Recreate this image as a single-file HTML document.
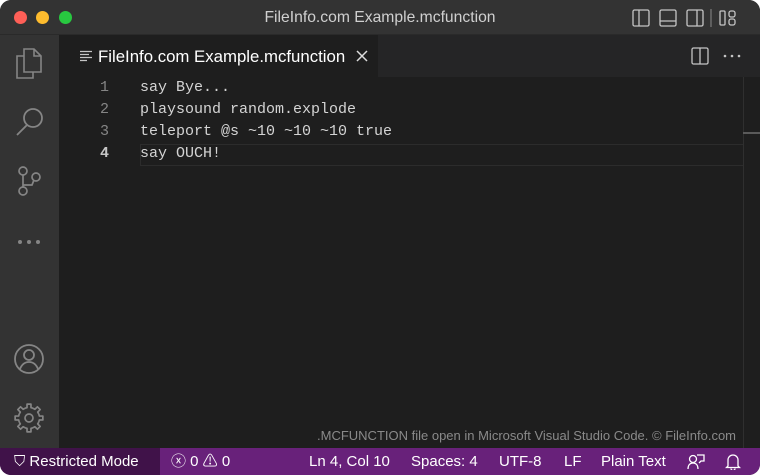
<!DOCTYPE html>
<html><head><style>
*{margin:0;padding:0;box-sizing:border-box}
body{width:760px;height:475px;background:#fff;overflow:hidden;font-family:"Liberation Sans",sans-serif}
.win{position:absolute;left:0;top:0;width:760px;height:475px;border-radius:11px;overflow:hidden;background:#1e1e1e}
.title{position:absolute;left:0;top:0;width:760px;height:35px;background:#333333;border-bottom:1px solid #2a2a2a;color:#d0d0d0;font-size:15.7px;text-align:center;line-height:35px}
.dot{position:absolute;top:11px;width:13px;height:13px;border-radius:50%}
.act{position:absolute;left:0;top:35px;width:59px;height:413px;background:#333333}
.tabs{position:absolute;left:59px;top:35px;width:701px;height:42px;background:#252526}
.tab{position:absolute;left:0;top:0;width:319px;height:42px;background:#1e1e1e;color:#fff;font-size:16.8px;line-height:44px;padding-left:39px}
.code{position:absolute;top:77px;font-family:"Liberation Mono",monospace;font-size:15px;line-height:22px;color:#d4d4d4}
.ln{left:59px;width:50px;text-align:right;color:#858585}
.status{position:absolute;left:0;top:448px;width:760px;height:27px;background:#68217a;color:#fff;font-size:15px;line-height:27px}
.status span{position:absolute;top:0}
svg{position:absolute}
</style></head><body><div class="win">
<div class="title">FileInfo.com Example.mcfunction
<div class="dot" style="left:14px;background:#fe5f57"></div>
<div class="dot" style="left:36px;background:#febc2e"></div>
<div class="dot" style="left:59px;background:#28c840"></div>
<svg style="left:632px;top:9px" width="120" height="18" fill="none" stroke="#c5c5c5" stroke-width="1.3">
<rect x="1" y="1" width="16" height="16" rx="1.5"/><line x1="7" y1="1" x2="7" y2="17"/>
<rect x="28" y="1" width="16" height="16" rx="1.5"/><line x1="28" y1="12" x2="44" y2="12"/>
<rect x="55" y="1" width="16" height="16" rx="1.5"/><line x1="65" y1="1" x2="65" y2="17"/>
<line x1="79" y1="0" x2="79" y2="18" stroke="#777"/>
<rect x="88" y="2" width="5" height="14" rx="1"/><rect x="97" y="2" width="6" height="6" rx="2"/><rect x="97" y="10" width="6" height="6" rx="2"/>
</svg>
</div>
<div class="act">
<svg style="left:15px;top:13px" width="30" height="32" fill="none" stroke="#858585" stroke-width="1.6"><path d="M9 1h10l7 7v16H9z M19 1v7h7"/><path d="M9 8H2v22h16v-6"/></svg>
<svg style="left:16px;top:72px" width="30" height="32" fill="none" stroke="#858585" stroke-width="1.8"><circle cx="17" cy="11" r="9"/><path d="M11 18L1 28"/></svg>
<svg style="left:16px;top:130px" width="28" height="32" fill="none" stroke="#858585" stroke-width="1.7"><circle cx="7" cy="6" r="4"/><circle cx="20" cy="12" r="4"/><circle cx="7" cy="26" r="4"/><path d="M7 10v12M7 20h9l2-5"/></svg>
<svg style="left:17px;top:204px" width="26" height="6" fill="#858585"><circle cx="3" cy="3" r="2"/><circle cx="12" cy="3" r="2"/><circle cx="21" cy="3" r="2"/></svg>
<svg style="left:13px;top:308px" width="32" height="32" fill="none" stroke="#858585" stroke-width="1.8"><circle cx="16" cy="16" r="14"/><circle cx="16" cy="12" r="5"/><path d="M7 26c2-5 5-7 9-7s7 2 9 7"/></svg>
<svg style="left:13px;top:367px" width="32" height="32" fill="none" stroke="#858585" stroke-width="1.7" stroke-linejoin="round">
<g transform="translate(16,16)">
<path id="t" d="M-4.02 -9.70A10.5 10.5 0 0 1 -2 -10.31L-1.95 -13.86L1.95 -13.86L2 -10.31A10.5 10.5 0 0 1 4.02 -9.70"/>
<use href="#t" transform="rotate(45)"/><use href="#t" transform="rotate(90)"/><use href="#t" transform="rotate(135)"/><use href="#t" transform="rotate(180)"/><use href="#t" transform="rotate(225)"/><use href="#t" transform="rotate(270)"/><use href="#t" transform="rotate(315)"/>
<circle r="4"/></g></svg>
</div>
<div class="tabs">
<div class="tab">FileInfo.com Example.mcfunction
<svg style="left:20px;top:15px" width="14" height="12" stroke="#c5c5c5" stroke-width="1.3"><path d="M1 1.5h12M1 4.5h9M1 7.5h12M1 10.5h7"/></svg>
<svg style="left:296px;top:14px" width="14" height="14" stroke="#ddd" stroke-width="1.5"><path d="M2 2l10 10M12 2L2 12"/></svg>
</div>
<svg style="left:632px;top:12px" width="18" height="18" fill="none" stroke="#c5c5c5" stroke-width="1.3"><rect x="1" y="1" width="16" height="16" rx="1.5"/><line x1="9" y1="1" x2="9" y2="17"/></svg>
<svg style="left:664px;top:19px" width="20" height="4" fill="#c5c5c5"><circle cx="2" cy="2" r="1.3"/><circle cx="9" cy="2" r="1.3"/><circle cx="16" cy="2" r="1.3"/></svg>
</div>
<div style="position:absolute;left:140px;top:144px;width:604px;height:22px;border:1px solid #2c2c2c"></div>
<div style="position:absolute;left:743px;top:77px;width:1px;height:371px;background:#2f2f2f"></div>
<div style="position:absolute;left:743px;top:132px;width:17px;height:2px;background:#5a5a5a"></div>
<div class="code ln">1<br>2<br>3<br><span style="color:#c6c6c6;font-weight:bold">4</span></div>
<div class="code" style="left:140px">say Bye...<br>playsound random.explode<br>teleport @s ~10 ~10 ~10 true<br>say OUCH!</div>
<div style="position:absolute;right:24px;top:428px;color:#8a8a8a;font-size:13px">.MCFUNCTION file open in Microsoft Visual Studio Code. © FileInfo.com</div>
<div class="status">
<div style="position:absolute;left:0;top:0;width:160px;height:27px;background:#401249"></div>
<span style="left:14px">⛉ Restricted Mode</span>
<span style="left:171px">ⓧ 0 ⚠ 0</span>
<span style="left:309px">Ln 4, Col 10</span>
<span style="left:411px">Spaces: 4</span>
<span style="left:499px">UTF-8</span>
<span style="left:564px">LF</span>
<span style="left:601px">Plain Text</span>
<svg style="left:687px;top:5px" width="18" height="17" fill="none" stroke="#fff" stroke-width="1.3"><circle cx="6" cy="6" r="3.5"/><path d="M1 16c0-4 2-6 5-6s5 2 5 6M10 2h7v6h-3l-2 2"/></svg>
<svg style="left:725px;top:5px" width="16" height="17" fill="none" stroke="#fff" stroke-width="1.3"><path d="M3 13V7a5 5 0 0110 0v6l1.5 1.5h-13zM6 15.5a2 2 0 004 0"/></svg>
</div>
</div></body></html>
